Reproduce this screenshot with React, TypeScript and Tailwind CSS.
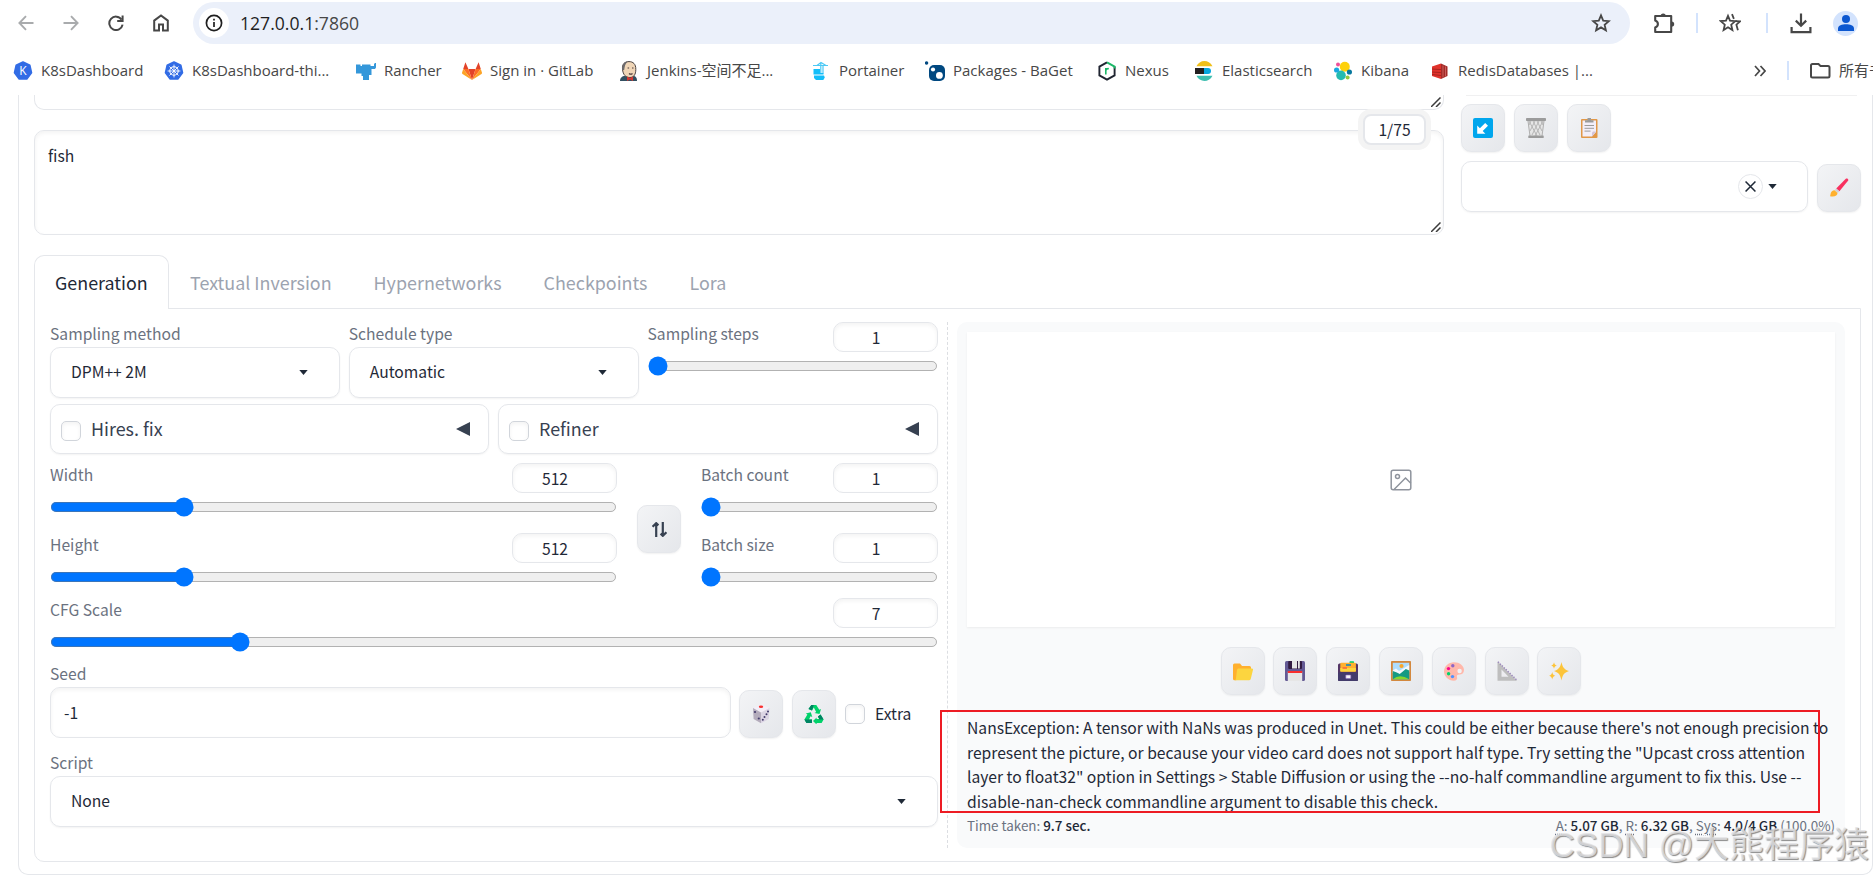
import React, { useState } from "react";

type Children = { children?: React.ReactNode };

const BackIcon = ({ flip = false }: { flip?: boolean }) => (
  <svg viewBox="0 0 16 16" className={flip ? "h-4 w-4 rotate-180" : "h-4 w-4"} fill="none" stroke="#a9abad" strokeWidth="1.9">
    <path d="M15.5 8H1.6M8 1.2 1.4 8 8 14.8" />
  </svg>
);

const ReloadIcon = () => (
  <svg viewBox="0 0 16 16" className="h-4 w-4" fill="none" stroke="#474747" strokeWidth="2">
    <path d="M13.6 4.6A6.7 6.7 0 1 0 14.6 9.6" />
    <path d="M14.6 0.6V6H9.2" />
  </svg>
);

const HomeIcon = () => (
  <svg viewBox="0 0 16 18" className="h-[18px] w-4" fill="none" stroke="#474747" strokeWidth="2">
    <path d="M1.2 16.6V6.6L8 1.4l6.8 5.2v10H10V10.4H6v6.2z" />
  </svg>
);

const StarIcon = () => (
  <svg viewBox="0 0 20 20" className="h-5 w-5" fill="none" stroke="#474747" strokeWidth="1.8">
    <path d="M10 2.4l2.2 5.2 5.6.5-4.2 3.7 1.3 5.5-4.9-2.9-4.9 2.9 1.3-5.5L2.2 8.1l5.6-.5z" />
  </svg>
);

const PuzzleIcon = () => (
  <svg viewBox="0 0 22 22" className="h-[22px] w-[22px]">
    <path d="M2.2 4h16v16h-16v-4.6c3.6-1.2 3.6-5.6 0-6.8z" fill="none" stroke="#474747" strokeWidth="2.1" strokeLinejoin="round" />
    <path d="M7.6 4a2.6 2.6 0 0 1 5.2 0zM18.6 9.4a2.6 2.6 0 0 1 0 5.2z" fill="#474747" />
  </svg>
);

const StarsIcon = () => (
  <svg viewBox="0 0 22 20" className="h-5 w-[22px]" fill="none" stroke="#474747" strokeWidth="1.8">
    <path d="M9 2.8l2 4.8 5.2.5-4 3.6 1.2 5.4L9 14.3l-4.4 2.8 1.2-5.4-4-3.6L7 7.6z" />
    <path d="M13 1.2l1.9 4.6M16.3 8.1l4.7.3-3.6 3.3 1.5 5.6" />
  </svg>
);

const DownloadIcon = () => (
  <svg viewBox="0 0 22 22" className="h-[22px] w-[22px]" fill="none" stroke="#474747" strokeWidth="2.2">
    <path d="M11 1.5v12M5.8 8.6l5.2 5.2 5.2-5.2M1.6 15v5.2h18.8V15" />
  </svg>
);

const KubeIcon = ({ letter }: { letter?: string }) => (
  <svg viewBox="0 0 20 20" className="h-5 w-5">
    <path d="M10 1l6.8 3.3 1.7 7.4-4.7 6.2H6.2L1.5 11.7l1.7-7.4z" fill="#326ce5" stroke="#326ce5" strokeWidth="1.6" strokeLinejoin="round" />
    {letter ? (
      <text x="10" y="14.3" textAnchor="middle" fontSize="12" fill="#fff" fontFamily="Open Sans, sans-serif">{letter}</text>
    ) : (
      <g fill="none" stroke="#fff" strokeWidth="1.1">
        <circle cx="10" cy="10" r="4.2" />
        <path d="M10 3.6v12.8M3.6 10h12.8M5.5 5.5l9 9M14.5 5.5l-9 9" strokeWidth=".9" />
      </g>
    )}
  </svg>
);

const RancherIcon = () => (
  <svg viewBox="0 0 20 20" className="h-5 w-5" fill="#3497da">
    <path d="M0 3.500h4.500V5H6V3.500h8.500V5H18V3l1-1h1v4.500L19 8h-3.500v6H13v5H7v-4H5.500v-2.500H0z" />
  </svg>
);

const GitLabIcon = () => (
  <svg viewBox="0 0 20 20" className="h-5 w-5">
    <path d="M10 19 6.4 8h7.2z" fill="#e24329" />
    <path d="M10 19 6.4 8H1.2zM10 19l3.6-11h5.2z" fill="#fc6d26" />
    <path d="M1.2 8-.1 12l.6 1L10 19zM18.8 8l1.3 4-.6 1L10 19z" fill="#fca326" />
    <path d="M1.2 8 3.4 1.2 6.4 8zM18.8 8l-2.2-6.8L13.6 8z" fill="#e24329" />
  </svg>
);

const JenkinsIcon = () => (
  <svg viewBox="0 0 20 20" className="h-5 w-5">
    <path d="M1 20c0-3 2-5 5-5h8c3 0 4 2 4 5z" fill="#335061" />
    <path d="M3.5 8C3 3 6 .6 10 .6S17 3 16.8 8.5c0 5-2 8-6 8S4 14 3.5 8z" fill="#f0d6b7" stroke="#4a4240" strokeWidth="1" />
    <path d="M3.2 9C2.4 3 6 .5 9 .6 6 3 6 5 5.2 9z" fill="#6d6b6d" />
    <path d="M8.6 7h1.5M13 7h1.5M10 12.5c1 .8 2.5.8 3.5 0" stroke="#49373a" strokeWidth="1.2" fill="none" />
    <path d="m8 15.5 3 1.5 3-1.5V20l-3-1.5L8 20z" fill="#d33833" />
  </svg>
);

const PortainerIcon = () => (
  <svg viewBox="0 0 20 20" className="h-5 w-5">
    <path d="M2 4.5h15M6 4.5l4-3 5 3M9.8 2v10M12 4.500v8" stroke="#4cc9f5" strokeWidth="1.2" fill="none" />
    <path d="M2.500 8h6.500v4h3.500V13.500H2.500zM3 14.500h10l.8 2-1.500 2.500H5L3 17z" fill="#13bef9" />
  </svg>
);

const NugetIcon = () => (
  <svg viewBox="0 0 20 20" className="h-5 w-5">
    <circle cx="1.6" cy="2" r="1.7" fill="#004880" />
    <rect x="4" y="4" width="16" height="16" rx="5" fill="#004880" />
    <circle cx="8" cy="8.5" r="2.1" fill="#fff" />
    <circle cx="14.4" cy="14.4" r="3.4" fill="#fff" />
  </svg>
);

const NexusIcon = () => (
  <svg viewBox="0 0 20 20" className="h-5 w-5" fill="none">
    <path d="M10 1.4 2.4 5.6v8.8l7.6 4.2 7.6-4.2V5.6" stroke="#1f2430" strokeWidth="1.9" />
    <path d="M10 1.4 17.6 5.6v2" stroke="#1bb868" strokeWidth="1.9" />
    <path d="M8.8 13.5V7M8.8 9.5c.4-1.5 1.5-2 3-1.8" stroke="#1bb868" strokeWidth="1.6" />
  </svg>
);

const ElasticIcon = () => (
  <svg viewBox="0 0 20 20" className="h-5 w-5">
    <path d="M2.5 5.2C4 2 7 0 10.5 0c3 0 6 1.5 8 5.2z" fill="#f0bf1a" />
    <path d="M1 7h11a3 3 0 0 1 0 6H1z" fill="#231f20" />
    <path d="M10 7h4a3 3 0 0 1 0 6h-4z" fill="#07a5de" />
    <path d="M2.5 14.8C4 18 7 20 10.5 20c3 0 6-1.5 8-5.200z" fill="#3ebeb0" />
  </svg>
);

const KibanaIcon = () => (
  <svg viewBox="0 0 20 20" className="h-5 w-5">
    <circle cx="11.8" cy="5.8" r="5" fill="#fed10a" />
    <circle cx="8" cy="14.4" r="4.8" fill="#24bbb1" />
    <circle cx="5" cy="3.6" r="2" fill="#ef5098" />
    <circle cx="3.6" cy="9" r="2.6" fill="#17a8e0" />
    <circle cx="16.4" cy="11" r="2.6" fill="#07789e" />
    <circle cx="14.6" cy="16.4" r="2" fill="#93c83e" />
  </svg>
);

const RedisIcon = () => (
  <svg viewBox="0 0 20 20" className="h-5 w-5">
    <path d="M2 5.5 11 2.5V18L2 15z" fill="#e0322b" />
    <path d="M11 2.5 17.500 5.5V15L11 18z" fill="#a32a27" />
    <path d="M2 8l9 .6M2 11l9 .6M2 13.5l9 1" stroke="#9d1f1b" strokeWidth=".8" />
    <path d="M13 4.5v12M15.5 5.5v10" stroke="#c9605d" strokeWidth="1" />
  </svg>
);

const Emoji = ({ children }: Children) => (
  <svg viewBox="0 0 20 20" className="h-5 w-5">{children}</svg>
);

const ArrowEmoji = () => (
  <Emoji>
    <rect width="20" height="20" rx="2" fill="#00a6ed" />
    <path d="M4.2 15.8V7.6l2.7 2.7L12.2 5 15 7.8l-5.3 5.3 2.7 2.7z" fill="#fff" />
  </Emoji>
);

const TrashEmoji = () => (
  <Emoji>
    <path d="M1.5 2.5h17L16.3 18H3.7z" fill="#e6e6e6" />
    <path d="m3 3 8 15M7 3l7 14M11 3l5 10M15 3l2 4M17 3 9 18M13 3 6 17M9 3l-5 10M5 3 3 7" stroke="#b5b5b5" strokeWidth="1" />
    <path d="M2 3l2 15M18 3l-2 15" stroke="#b0b0b0" strokeWidth="1" />
    <rect x="0" y="0" width="20" height="3" rx=".8" fill="#9b9b9b" />
    <rect x="2.3" y="17.5" width="15.4" height="2.5" rx=".6" fill="#9b9b9b" />
  </Emoji>
);

const ClipboardEmoji = () => (
  <Emoji>
    <rect x="2" y="1" width="16.5" height="19" rx="1" fill="#e19747" />
    <path d="M3.5 2.5H17V14l-4 4.5H3.5z" fill="#f3eef8" />
    <path d="m17 13.5-4 5v-4l1-1z" fill="#d3c4d8" />
    <path d="M5.5 7.5H15M5.5 10.3H15M5.5 13.1h6" stroke="#9b9b9b" strokeWidth="1" />
    <path d="M6 4.500V2.2h2.500V0H12v2.2h2.500v2.300z" fill="#9b9b9b" />
  </Emoji>
);

const BrushEmoji = () => (
  <Emoji>
    <path d="M16.8.8c1.4-1 3.2.6 2.2 2L10.4 13.2 7.2 10.6z" fill="#f8315f" />
    <path d="m7.2 10.6 3.2 2.6-1.6 1.7-3.1-2.6z" fill="#d3d3d3" />
    <path d="M5.5 12.3 8.5 15c0 3-3 4-7.5 3.2C1.8 17.5 1 12.5 5.5 12.3z" fill="#ffb02e" />
  </Emoji>
);

const DiceEmoji = () => (
  <Emoji>
    <path d="m10 .8 8.500 3.2-8.500 4.500L2 4z" fill="#f3eef8" />
    <path d="M2 4l8 4.5V19.300L2.600 15z" fill="#b4acbc" />
    <path d="M18.500 4 10 8.5v10.800L17.800 15z" fill="#dcd5e4" />
    <ellipse cx="10" cy="2.800" rx="2.200" ry="1.200" fill="#f8312f" />
    <g fill="#433b6b">
      <circle cx="4" cy="8" r="1.1" />
      <circle cx="7.8" cy="14.500" r="1.1" />
      <circle cx="17" cy="7.500" r="1" />
      <circle cx="15.500" cy="10.300" r="1" />
      <circle cx="13.500" cy="13" r="1" />
      <circle cx="11.800" cy="15.800" r="1" />
    </g>
  </Emoji>
);

const RecycleEmoji = () => (
  <Emoji>
    <path d="M7.300 1h5l3 4.800 1.700-.8-1.500 5-5-1 1.700-1L9.800 3.600 8 6.600 4.500 5z" fill="#00d26a" />
    <path d="m16.600 10.500 3 5-2 3.500h-5v1.500L9 17l3.600-3.600V15h2.800l-1.500-2.600z" fill="#00d26a" />
    <path d="M2.400 19 .4 15.500l3-5-1.600-1 5-1.300 1.500 4.800-1.800-.8L5 15.500h3V19z" fill="#00d26a" />
    <path d="M4.500 5 7.300 1h2.500L8 6.600zM16.600 10.500l3 5h-4.200l-1.500-3.100zM2.400 19 .4 15.500H8V19z" fill="#008463" />
  </Emoji>
);

const FolderEmoji = () => (
  <Emoji>
    <path d="M0 4a1.500 1.500 0 0 1 1.500-1.500H7l2 2.500h7.500A1.500 1.500 0 0 1 18 6.500V12L3 19.300H1.500A1.500 1.500 0 0 1 0 17.800z" fill="#ffb02e" />
    <path d="M5.200 7.500H19q1.300 0 1 1.200l-2.200 9q-.3 1.600-2 1.600H1.500q1 0 1.400-1.400L4 9q.3-1.500 1.200-1.500z" fill="#fcd53f" />
  </Emoji>
);

const FloppyEmoji = () => (
  <Emoji>
    <rect width="20" height="20" rx="1.6" fill="#635994" />
    <rect x="3.2" width="13.8" height="8" rx="1" fill="#321b41" />
    <path d="M7 0h5v7.5H7zM13 0h1.800v7.500H13z" fill="#e6e6e6" />
    <rect x="2.8" y="10.5" width="14.4" height="9.5" fill="#e6e6e6" />
    <rect x="2.8" y="10" width="14.4" height="2" fill="#f92f2f" />
  </Emoji>
);

const CabinetEmoji = () => (
  <Emoji>
    <rect x="0" y="2.5" width="20" height="17.5" rx="1.5" fill="#533566" />
    <rect x="11.5" y=".3" width="4.5" height="4" rx=".6" fill="#00d26a" />
    <rect x="2.3" y="1.8" width="15.6" height="9" rx="1" fill="#ffb02e" />
    <path d="M2.3 7h15.6v3.500H2.3z" fill="#fcd53f" />
    <path d="M8 4h5" stroke="#0084ce" strokeWidth="1.5" />
    <path d="M4.5 7H9" stroke="#f8603f" strokeWidth="1.5" />
    <rect x="0" y="11.5" width="20" height="8.5" rx="1" fill="#433b6b" />
    <rect x="7.8" y="14" width="5" height="3.6" rx=".6" fill="#f4f4f4" stroke="#8d65c5" strokeWidth=".6" />
  </Emoji>
);

const PictureEmoji = () => (
  <Emoji>
    <rect width="20" height="20" rx=".8" fill="#d3883e" />
    <rect x="1.8" y="1.8" width="16.4" height="16.4" fill="#aeddff" />
    <path d="M1.8 9.500 5 7.500l3 2.500 10.200-6v7l-8 4-8.400-3z" fill="#f4f8fd" />
    <path d="m1.8 10 4 1.500 3 1.500 6-5 3.400 1.500v8.700H1.8z" fill="#149a83" />
    <path d="M1.8 18.200q7-6 16.400 0z" fill="#86d72f" />
    <circle cx="10.5" cy="5" r="2.1" fill="#f9a62b" />
  </Emoji>
);

const PaletteEmoji = () => (
  <Emoji>
    <path d="M10 1.300c5.500 0 10 3.500 10 7.700 0 3-2 4.500-4.500 4.500s-3 1-2.500 2.500c.8 2-.5 3.700-3.200 3.700C4.500 19.700 0 15.300 0 10.500c0-5 4.500-9.200 10-9.200z" fill="#ffb8ab" />
    <circle cx="15.6" cy="10" r="2.2" fill="#f2f2f4" />
    <circle cx="8.8" cy="4.8" r="1.7" fill="#8d65c5" />
    <circle cx="4.5" cy="7.6" r="1.7" fill="#f70a8d" />
    <circle cx="4.6" cy="12.7" r="1.7" fill="#00d26a" />
    <circle cx="8.5" cy="15.6" r="1.7" fill="#5092ff" />
  </Emoji>
);

const RulerEmoji = () => (
  <Emoji>
    <path d="M.5.5 20 19.8H.5z" fill="#bebebe" />
    <path d="M4.5 8.5v7.300h7z" fill="#ededf0" />
    <path d="m1 .8 18.500 18" stroke="#9a85bb" strokeWidth="1.4" strokeDasharray="1.4 1.3" />
  </Emoji>
);

const SparklesEmoji = () => (
  <Emoji>
    <g fill="#fcc43a">
      <path d="M12.5 1c1 5 2.5 7.500 7.500 9-5 1.800-6.500 4-7.500 9.500-1.200-5.500-2.500-7.700-7.500-9.500 5-1.500 6.300-4 7.500-9z" />
      <path d="M5 1.200c.5 2 1 2.700 2.800 3.300C6 5.200 5.500 6 5 7.800 4.500 6 4 5.200 2.200 4.500 4 4 4.500 3.200 5 1.200zM3.200 11c.5 2.200 1.200 3 3.100 3.700-1.900.7-2.600 1.600-3.100 3.700-.5-2.100-1.200-3-3.100-3.700 2-.7 2.600-1.500 3.100-3.700z" />
    </g>
  </Emoji>
);

const bookmarks = [
  { name: "K8sDashboard", icon: <KubeIcon letter="K" />, box: "w-[151px]" },
  { name: "K8sDashboard-thi...", icon: <KubeIcon />, box: "w-[192px]" },
  { name: "Rancher", icon: <RancherIcon />, box: "w-[106px]" },
  { name: "Sign in · GitLab", icon: <GitLabIcon />, box: "w-[157px]" },
  { name: "Jenkins-空间不足...", icon: <JenkinsIcon />, box: "w-[192px]" },
  { name: "Portainer", icon: <PortainerIcon />, box: "w-[114px]" },
  { name: "Packages - BaGet", icon: <NugetIcon />, box: "w-[172px]" },
  { name: "Nexus", icon: <NexusIcon />, box: "w-[97px]" },
  { name: "Elasticsearch", icon: <ElasticIcon />, box: "w-[139px]" },
  { name: "Kibana", icon: <KibanaIcon />, box: "w-[97px]" },
  { name: "RedisDatabases |...", icon: <RedisIcon />, box: "w-[192px]" },
];

const BrowserBar = () => (
  <header className="h-[95px] font-['Open_Sans','Noto_Sans_CJK_SC',sans-serif] text-[#474747]">
    <div className="flex h-[47px] items-center pb-px pl-[18px]">
      <div className="flex w-[175px] shrink-0 items-center gap-[29px]">
        <BackIcon />
        <BackIcon flip />
        <ReloadIcon />
        <HomeIcon />
      </div>
      <div className="flex h-[42px] w-[1437px] shrink-0 items-center rounded-full bg-[#ebf0fa] pr-[19px] pl-1.5">
        <span className="flex h-[30px] w-[30px] items-center justify-center rounded-full bg-white">
          <svg viewBox="0 0 18 18" className="h-[18px] w-[18px]" fill="none" stroke="#1f1f1f" strokeWidth="1.7">
            <circle cx="9" cy="9" r="7.6" />
            <path d="M9 8v5M9 4.8v1.8" />
          </svg>
        </span>
        <span className="ml-[11px] flex-1 text-[17.6px] text-[#1f1f1f]">
          127.0.0.1<span className="text-[#474747]">:7860</span>
        </span>
        <StarIcon />
      </div>
      <div className="flex items-center pl-[23px]">
        <PuzzleIcon />
        <i className="mx-[21px] h-5 w-0.5 bg-[#d3e3fd]" />
        <StarsIcon />
        <i className="mr-[22px] ml-[25px] h-5 w-0.5 bg-[#d3e3fd]" />
        <DownloadIcon />
        <span className="ml-[21px] flex h-[25px] w-[25px] items-center justify-center rounded-full bg-[#d3e3fd]">
          <svg viewBox="0 0 16 16" className="h-4 w-4" fill="#0b57d0">
            <circle cx="8" cy="4" r="4" />
            <path d="M0 16v-2.500C0 10.500 4 9.300 8 9.300s8 1.200 8 4.200V16z" />
          </svg>
        </span>
      </div>
    </div>
    <div className="flex h-[47px] items-center pl-[13px] text-[15px] whitespace-nowrap">
      {bookmarks.map((mark) => (
        <div key={mark.name} className={`flex shrink-0 items-center gap-2 ${mark.box}`}>
          {mark.icon}
          {mark.name}
        </div>
      ))}
      <svg viewBox="0 0 12 12" className="ml-[132px] h-3 w-3 shrink-0" fill="none" stroke="#474747" strokeWidth="1.7">
        <path d="m1 1 4.500 5L1 11M6.500 1 11 6l-4.500 5" />
      </svg>
      <i className="ml-[21px] h-[19px] w-0.5 shrink-0 bg-[#d3e3fd]" />
      <svg viewBox="0 0 22 18" className="mr-2 ml-5 h-[18px] w-[22px] shrink-0" fill="none" stroke="#474747" strokeWidth="2">
        <path d="M2 3.500V14q0 1.500 1.500 1.500H19q1.500 0 1.500-1.500V5.500Q20.500 4 19 4h-7.500L9.500 2h-6Q2 2 2 3.500z" />
      </svg>
      所有书签
    </div>
  </header>
);

const ToolButton = ({ children }: Children) => (
  <button className="flex h-12 w-11 shrink-0 items-center justify-center rounded-[10px] border border-[#e5e7eb] bg-gradient-to-br from-[#f3f4f6] to-[#e5e7eb] shadow-[0_1px_2px_rgba(0,0,0,0.06)]">
    {children}
  </button>
);

const Caret = () => (
  <svg viewBox="0 0 10 6" className="h-[5px] w-[9px]" fill="#1f2937"><path d="M0 0h10L5 6z" /></svg>
);

const Label = ({ children }: Children) => (
  <div className="h-[25px] text-[15.67px] leading-6 text-[#6b7280]">{children}</div>
);

const Dropdown = ({ label, value }: { label: string; value: string }) => (
  <div className="flex-1">
    <Label>{label}</Label>
    <div className="flex h-[51px] items-center justify-between rounded-[10px] border border-[#e5e7eb] pr-[31px] pl-5 text-[15.67px] shadow-[0_1px_2px_rgba(0,0,0,0.05)]">
      <span className="pb-0.5">{value}</span>
      <Caret />
    </div>
  </div>
);

const Slider = ({ label, value, min, max }: { label: string; value: number; min: number; max: number }) => {
  const [current, setCurrent] = useState<number>(value);
  return (
    <div>
      <div className="flex h-[34px] items-start justify-between">
        <Label>{label}</Label>
        <div className="h-[30px] w-[105px] rounded-[10px] border border-[#e5e7eb] pr-[19px] text-center text-[15.67px] leading-[29px] shadow-[inset_0_2px_4px_rgba(0,0,0,0.05)]">
          {current}
        </div>
      </div>
      <input
        type="range"
        className="block h-4 w-full [zoom:1.25]"
        min={min}
        max={max}
        value={current}
        onChange={(event) => setCurrent(Number(event.target.value))}
      />
    </div>
  );
};

const Checkbox = () => (
  <span className="h-5 w-5 shrink-0 rounded-[5px] border border-[#d1d5db] bg-white shadow-[inset_0_2px_4px_rgba(0,0,0,0.05)]" />
);

const Accordion = ({ title }: { title: string }) => (
  <div className="flex h-[50px] items-center rounded-[10px] border border-[#e5e7eb] pr-[18px] pl-2.5 shadow-[0_1px_2px_rgba(0,0,0,0.05)]">
    <span className="mt-1 flex"><Checkbox /></span>
    <span className="ml-2.5 flex-1 pb-px text-[17.9px] text-[#374151]">{title}</span>
    <svg viewBox="0 0 14 14" className="h-3.5 w-3.5" fill="#374151"><path d="M14 0v14L0 7z" /></svg>
  </div>
);

const ResizeGrip = () => (
  <svg viewBox="0 0 10 10" className="absolute right-0.5 bottom-0.5 h-2.5 w-2.5" stroke="#3c3c3c" strokeWidth="1.5">
    <path d="m0 10 9.500-9.500M5 10 9.500 5.500" />
  </svg>
);

const Prompts = () => (
  <div className="flex h-[160px]">
    <div className="w-[1410px]">
      <div className="relative h-[15px] rounded-b-[10px] border border-t-0 border-[#e5e7eb]">
        <ResizeGrip />
      </div>
      <div className="relative mt-5 h-[105px] rounded-[10px] border border-[#e5e7eb] px-[13px] py-3 text-[15.67px] leading-[26px] shadow-[inset_0_2px_4px_rgba(0,0,0,0.05)]">
        fish
        <span className="absolute -top-[17px] right-[17px] h-[31px] w-[63px] rounded-lg border-2 border-[#e5e7eb] bg-white text-center leading-[27px] shadow-[0_0_0_5px_#f4f4f4]">
          1/75
        </span>
        <ResizeGrip />
      </div>
    </div>
    <div className="ml-[17px] flex-1">
      <div className="mr-[15px] ml-[5px] border-t border-[#f0f0f1]" />
      <div className="mt-2 flex gap-[9px]">
        <ToolButton><ArrowEmoji /></ToolButton>
        <ToolButton><TrashEmoji /></ToolButton>
        <ToolButton><ClipboardEmoji /></ToolButton>
      </div>
      <div className="mt-[9px] flex items-end gap-[9px]">
        <div className="flex h-[51px] w-[347px] items-center justify-end rounded-[10px] border border-[#e5e7eb] pr-[30px] shadow-[0_1px_2px_rgba(0,0,0,0.05)]">
          <span className="mr-[5px] flex h-[25px] w-[25px] items-center justify-center rounded-full border border-[#e5e7eb]">
            <svg viewBox="0 0 10 10" className="h-[11px] w-[11px]" stroke="#1f2937" strokeWidth="1.4"><path d="m.5.5 9 9M9.500.5l-9 9" /></svg>
          </span>
          <Caret />
        </div>
        <ToolButton><BrushEmoji /></ToolButton>
      </div>
    </div>
  </div>
);

const Settings = () => (
  <div className="w-[888px] shrink-0">
    <div className="flex h-[82px] gap-[9px]">
      <Dropdown label="Sampling method" value="DPM++ 2M" />
      <Dropdown label="Schedule type" value="Automatic" />
      <div className="w-[290.5px]">
        <Slider label="Sampling steps" value={1} min={1} max={150} />
      </div>
    </div>
    <div className="grid grid-cols-[439px_440px] gap-[9px]">
      <Accordion title="Hires. fix" />
      <Accordion title="Refiner" />
    </div>
    <div className="mt-[9px] flex h-[135px]">
      <div className="w-[567px] space-y-4">
        <Slider label="Width" value={512} min={64} max={2048} />
        <Slider label="Height" value={512} min={64} max={2048} />
      </div>
      <div className="mt-[42px] mr-5 ml-5">
        <ToolButton>
          <svg viewBox="0 0 15 15" className="h-[15px] w-[15px]" fill="none" stroke="#374151" strokeWidth="2.2">
            <path d="M4.200 15V1.500M.6 4.800l3.600-3.600 2.200 2.200M10.800 0v13.500M14.400 10.200l-3.600 3.600-2.200-2.200" />
          </svg>
        </ToolButton>
      </div>
      <div className="flex-1 space-y-4">
        <Slider label="Batch count" value={1} min={1} max={100} />
        <Slider label="Batch size" value={1} min={1} max={8} />
      </div>
    </div>
    <Slider label="CFG Scale" value={7} min={1} max={30} />
    <div className="mt-2.5 flex">
      <div className="w-[681px]">
        <Label>Seed</Label>
        <div className="h-[51px] rounded-[10px] border border-[#e5e7eb] px-[13px] text-[15.67px] leading-[49px] shadow-[inset_0_2px_4px_rgba(0,0,0,0.05)]">
          -1
        </div>
      </div>
      <div className="mt-7 ml-2 flex items-center gap-[9px]">
        <ToolButton><DiceEmoji /></ToolButton>
        <ToolButton><RecycleEmoji /></ToolButton>
        <Checkbox />
        <span className="ml-px pb-px text-[15.67px]">Extra</span>
      </div>
    </div>
    <div className="mt-[13px] flex">
      <Dropdown label="Script" value="None" />
    </div>
  </div>
);

const Output = () => (
  <div className="ml-[9px] h-[526px] w-[888px] shrink-0 rounded-[10px] bg-[#f9fafb] px-2.5 pt-2.5">
    <div className="flex h-[295px] items-center justify-center bg-white shadow-[0_1px_2px_rgba(0,0,0,0.06)]">
      <svg viewBox="0 0 22 22" className="h-[22px] w-[22px]" fill="none" stroke="#8f949d" strokeWidth="1.5">
        <rect x="1.2" y="1.2" width="19.6" height="19.6" rx="2" />
        <circle cx="7.5" cy="7.5" r="2" />
        <path d="m4 20.500 11.500-11.500 5.300 5.300" />
      </svg>
    </div>
    <div className="mt-5 flex justify-center gap-[8.8px]">
      <ToolButton><FolderEmoji /></ToolButton>
      <ToolButton><FloppyEmoji /></ToolButton>
      <ToolButton><CabinetEmoji /></ToolButton>
      <ToolButton><PictureEmoji /></ToolButton>
      <ToolButton><PaletteEmoji /></ToolButton>
      <ToolButton><RulerEmoji /></ToolButton>
      <ToolButton><SparklesEmoji /></ToolButton>
    </div>
    <div className="relative mt-[21px] text-[15.67px] leading-[24.6px] whitespace-nowrap">
      <p>NansException: A tensor with NaNs was produced in Unet. This could be either because there's not enough precision to</p>
      <p>represent the picture, or because your video card does not support half type. Try setting the "Upcast cross attention</p>
      <p>layer to float32" option in Settings &gt; Stable Diffusion or using the --no-half commandline argument to fix this. Use --</p>
      <p>disable-nan-check commandline argument to disable this check.</p>
      <div className="absolute -top-1.5 -left-[27px] h-[103px] w-[880px] border-2 border-[#ed1c24]" />
    </div>
    <div className="flex justify-between text-[13.4px] leading-[22px] text-[#6b7280]">
      <p>Time taken: <b className="font-medium text-[#1f2937]">9.7 sec.</b></p>
      <p>
        <span className="underline decoration-dotted underline-offset-2">A</span>: <b className="font-medium text-[#1f2937]">5.07 GB</b>,{" "}
        <span className="underline decoration-dotted underline-offset-2">R</span>: <b className="font-medium text-[#1f2937]">6.32 GB</b>,{" "}
        <span className="underline decoration-dotted underline-offset-2">Sys</span>: <b className="font-medium text-[#1f2937]">4.0/4 GB</b> (100.0%)
      </p>
    </div>
  </div>
);

const tabs = ["Textual Inversion", "Hypernetworks", "Checkpoints", "Lora"];

const App = (): JSX.Element => {
  return (
    <div className="relative h-[877px] w-[1873px] overflow-hidden bg-white font-['Noto_Sans_CJK_SC',sans-serif] text-[#1f2937]">
      <BrowserBar />
      <main className="ml-[18px] h-[780px] w-[1855px] rounded-b-[10px] border border-t-0 border-[#e5e7eb] pl-[15px]">
        <Prompts />
        <div className="flex h-[53px] text-[17.9px] leading-[54px] text-[#9ca3af]">
          <div className="relative -mb-px h-[54px] w-[135px] rounded-t-[10px] border border-b-0 border-[#e5e7eb] bg-white pl-5 leading-[53px] text-[#1f2937]">
            Generation
          </div>
          <div className="flex flex-1 gap-[42px] pl-[21px]">
            {tabs.map((tab) => (
              <span key={tab}>{tab}</span>
            ))}
          </div>
        </div>
        <div className="flex h-[554px] w-[1827px] rounded-b-[10px] border border-[#e5e7eb] pt-[13px] pl-[15px]">
          <Settings />
          <div className="ml-[9px] h-[526px] border-l border-dashed border-[#dcdee2]" />
          <Output />
        </div>
      </main>
      <div className="absolute right-[4px] bottom-[10px] font-['Liberation_Sans','Noto_Sans_CJK_SC',sans-serif] text-[35px] leading-[44px] whitespace-nowrap text-[#e3e3e5]/80 [text-shadow:1px_1px_1px_#8a8a8a]">
        CSDN @大熊程序猿
      </div>
    </div>
  );
};

export default App;
